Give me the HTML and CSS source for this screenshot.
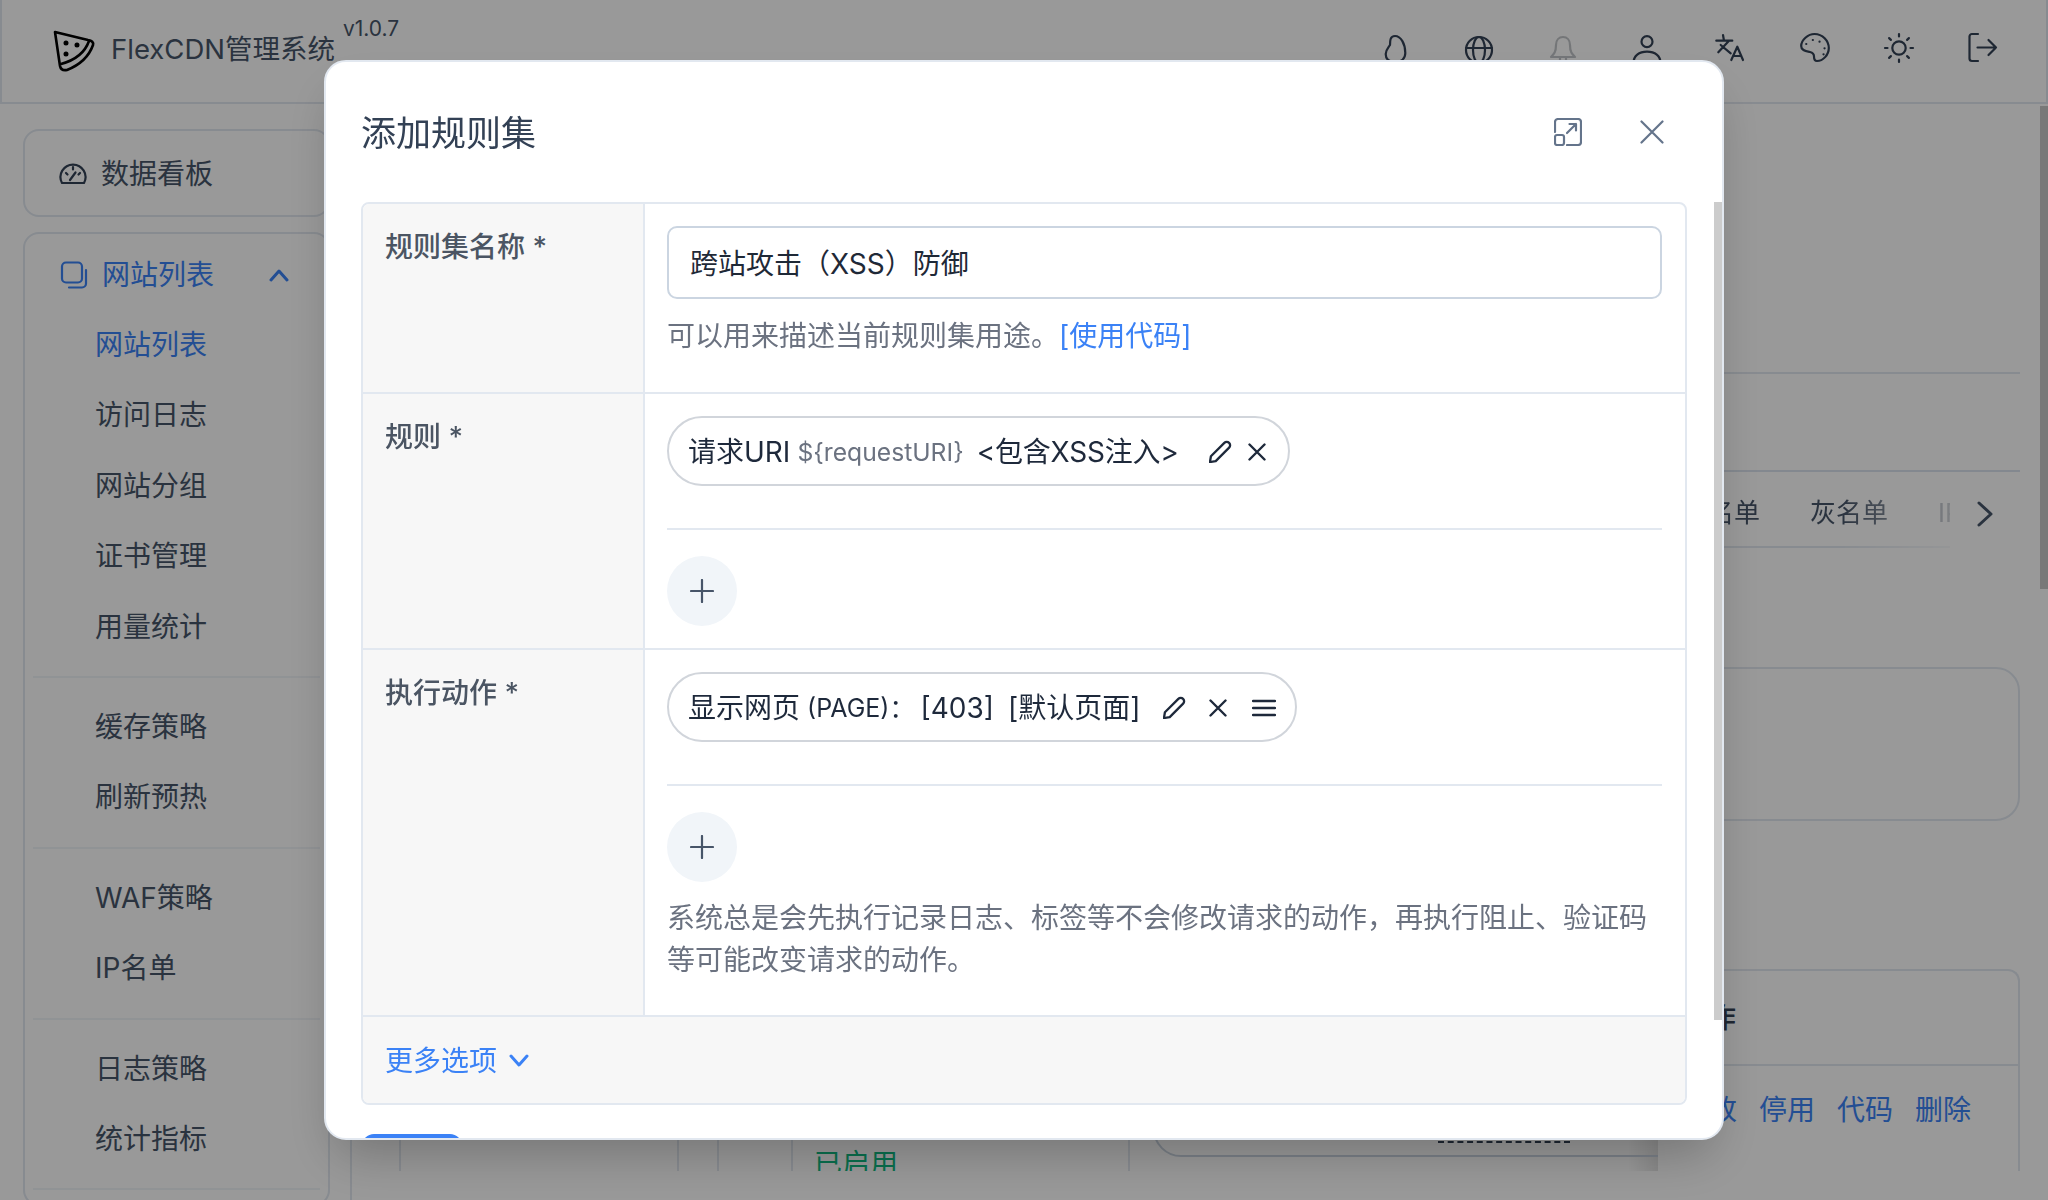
FILE: index.html
```html
<!DOCTYPE html>
<html lang="zh-CN">

<head>
    <meta charset="UTF-8" />
    <meta name="viewport" content="width=device-width, initial-scale=1.0" />
    <title>添加规则集 - FlexCDN管理系统</title>
    <link rel="stylesheet" href="styles.css">
</head>

<body>
    <div class="page">
        <!-- 顶部栏 -->
        <header class="topbar">
            <svg class="logo" viewBox="0 0 70 60" fill="none" stroke="#000" stroke-width="2.6" stroke-linejoin="round" stroke-linecap="round">
                <path d="M15 12L48 20Q54 21 53 25Q47 42 27 50Q21 51 20 46Z" />
                <path d="M21 44Q43 38 49 21" />
                <circle cx="26" cy="23" r="1.2" fill="#000" />
                <circle cx="37" cy="25" r="1.2" fill="#000" />
                <circle cx="26" cy="34" r="1.2" fill="#000" />
            </svg>
            <span class="brand">FlexCDN管理系统</span>
            <sup class="version">v1.0.7</sup>
            <div class="top-icons">
                <span class="top-icon">
                    <svg viewBox="0 0 32 32"><path d="M16 4C11 4 11 9 11 13C9 16 6.7 18 6.7 22C6.7 27 10 30 16 30C22 30 26.3 27 26.3 21C26.3 12 22 4 16 4Z" /></svg>
                </span>
                <span class="top-icon">
                    <svg viewBox="0 0 32 32"><circle cx="16" cy="18" r="13" /><ellipse cx="16" cy="18" rx="6" ry="13" /><path d="M3 16H29" /></svg>
                </span>
                <span class="top-icon muted">
                    <svg viewBox="0 0 32 32"><path d="M4 25C7 22 9 20 9 13C9 8 12 5 16 5C20 5 23 8 23 13C23 20 25 22 28 25Z" /><path d="M13 25V29M19 25V29" /></svg>
                </span>
                <span class="top-icon">
                    <svg viewBox="0 0 32 32"><circle cx="16" cy="9.7" r="5.5" /><path d="M2.5 31C2.5 24 8 19.7 16 19.7C24 19.7 29.5 24 29.5 31" /></svg>
                </span>
                <span class="top-icon">
                    <svg viewBox="0 0 32 32"><path d="M1.3 8.7H17.3M8 3L9 8.7M14 8.7L3.3 20.3M5.7 13L15.7 21.3M16.3 28L22.3 14.7L28 28M18 24H26.4" /></svg>
                </span>
                <span class="top-icon">
                    <svg viewBox="0 0 32 32"><path d="M15.5 2C23.5 2 29.8 8.5 29.8 16C29.8 23 24 29 18 29C15.5 29 15 26.5 15 24.5C15 21.5 13.5 20.5 11 20C8 19.5 2.2 19 2.2 14C2.2 8 9 2 15.5 2Z" /><path d="M13.8 8H13.9M20.5 9.7H20.6M25.5 16.3H25.6M24.5 22.3H24.6M7.2 12H7.3" /></svg>
                </span>
                <span class="top-icon">
                    <svg viewBox="0 0 32 32"><circle cx="16" cy="16" r="6.7" /><path d="M16 2V4.5M16 27.5V30M2 16H4.5M27.5 16H30M6.1 6.1L7.9 7.9M24.1 24.1L25.9 25.9M6.1 25.9L7.9 24.1M24.1 7.9L25.9 6.1" /></svg>
                </span>
                <span class="top-icon">
                    <svg viewBox="0 0 32 32"><path d="M11 2H5A2.5 2.5 0 0 0 2.5 4.5V26.5A2.5 2.5 0 0 0 5 29H11M10.5 15.5H29M21.5 8L29 15.5L21.5 23" /></svg>
                </span>
            </div>
        </header>

        <div class="layout">
            <!-- 左侧菜单 -->
            <aside class="sidebar">
                <div class="side-card side-single">
                    <svg class="side-icon side-gauge" viewBox="0 0 28 22"><path d="M3 20A12.500 12.500 0 1 1 25 20Z" /><path d="M14 4V6.500M7 10L8.500 11.500M21 10L19.500 11.500M11 17L16.500 9.500" /></svg>
                    <span>数据看板</span>
                </div>
                <div class="side-card">
                    <div class="side-head">
                        <svg class="side-icon" viewBox="0 0 28 28"><rect x="2" y="1.5" width="20" height="20" rx="4" /><path d="M9 26.5H22A4 4 0 0 0 26 22.5V9" /></svg>
                        <span>网站列表</span>
                        <svg class="side-arrow" viewBox="0 0 20 14"><path d="M2 12L10 3L18 12" /></svg>
                    </div>
                    <a class="side-item active">网站列表</a>
                    <a class="side-item">访问日志</a>
                    <a class="side-item">网站分组</a>
                    <a class="side-item">证书管理</a>
                    <a class="side-item">用量统计</a>
                    <div class="side-sep"></div>
                    <a class="side-item">缓存策略</a>
                    <a class="side-item">刷新预热</a>
                    <div class="side-sep"></div>
                    <a class="side-item">WAF策略</a>
                    <a class="side-item">IP名单</a>
                    <div class="side-sep"></div>
                    <a class="side-item">日志策略</a>
                    <a class="side-item">统计指标</a>
                    <div class="side-sep"></div>
                </div>
            </aside>

            <!-- 主内容，被弹窗盖住大半 -->
            <main class="main">
                <div class="main-top"></div>
                <div class="main-sub"></div>
                <div class="tabs-bar">
                    <div class="tabs">
                        <span>白名单</span>
                        <span>灰名单</span>
                        <span>IP名单</span>
                    </div>
                    <svg class="tabs-next" viewBox="0 0 16 26"><path d="M2 2L14 13L2 24" /></svg>
                </div>
                <div class="main-card"></div>
                <div class="tbl">
                    <div class="tbl-cell tbl-head"></div>
                    <div class="tbl-cell tbl-head"></div>
                    <div class="tbl-cell tbl-head"></div>
                    <div class="tbl-cell tbl-head"></div>
                    <div class="tbl-cell tbl-head"></div>
                    <div class="tbl-cell tbl-head tbl-ops-head">操作</div>
                    <div class="tbl-cell tbl-name">日志</div>
                    <div class="tbl-cell"></div>
                    <div class="tbl-cell"></div>
                    <div class="tbl-cell tbl-status">已启用</div>
                    <div class="tbl-cell tbl-config">
                        <div class="config-box"><span class="config-dash"></span></div>
                    </div>
                    <div class="tbl-cell tbl-ops">
                        <a>修改</a>
                        <a>停用</a>
                        <a>代码</a>
                        <a>删除</a>
                    </div>
                </div>
            </main>
        </div>
        <div class="page-thumb"></div>
    </div>

    <div class="overlay"></div>

    <!-- 弹窗 -->
    <div class="modal">
        <div class="modal-head">
            <h2>添加规则集</h2>
            <svg class="modal-expand" viewBox="0 0 28 28"><path d="M1 14V4A3 3 0 0 1 4 1H24A3 3 0 0 1 27 4V24A3 3 0 0 1 24 27H13" /><rect x="1" y="17" width="9" height="10" rx="2" /><path d="M13 15L22 6M15.500 6H22V12.500" /></svg>
            <svg class="modal-close" viewBox="0 0 24 24"><path d="M1.500 1.500L22.500 22.500M22.500 1.500L1.500 22.500" /></svg>
        </div>
        <div class="modal-body">
            <div class="form-table">
                <div class="form-row">
                    <div class="form-label">规则集名称 *</div>
                    <div class="form-value">
                        <input class="text-input" type="text" value="跨站攻击（XSS）防御" />
                        <p class="help help-first">可以用来描述当前规则集用途。<a>[使用代码]</a></p>
                    </div>
                </div>
                <div class="form-row">
                    <div class="form-label">规则 *</div>
                    <div class="form-value">
                        <div class="pill">
                            <span>请求URI</span>
                            <span class="pill-var">${requestURI}</span>
                            <span class="pill-op">&lt;包含XSS注入&gt;</span>
                            <svg class="pill-icon pencil-rule" viewBox="0 0 24 24"><path d="M1 23L2 17L16 3A3.500 3.500 0 0 1 21 8L7 22Z" /></svg>
                            <svg class="pill-icon x-icon x-rule" viewBox="0 0 18 18"><path d="M1.500 1.500L16.500 16.500M16.500 1.500L1.500 16.500" /></svg>
                        </div>
                        <div class="sep"></div>
                        <div class="add-btn">
                            <svg viewBox="0 0 24 24"><path d="M12 1V23M1 12H23" /></svg>
                        </div>
                    </div>
                </div>
                <div class="form-row">
                    <div class="form-label">执行动作 *</div>
                    <div class="form-value">
                        <div class="pill">
                            <span>显示网页</span>
                            <span class="pill-code">(PAGE)：</span>
                            <span class="pill-status">[403]</span>
                            <span class="pill-page">[默认页面]</span>
                            <svg class="pill-icon pencil-action" viewBox="0 0 24 24"><path d="M1 23L2 17L16 3A3.500 3.500 0 0 1 21 8L7 22Z" /></svg>
                            <svg class="pill-icon x-icon x-action" viewBox="0 0 18 18"><path d="M1.500 1.500L16.500 16.500M16.500 1.500L1.500 16.500" /></svg>
                            <svg class="pill-icon bars-icon" viewBox="0 0 24 18"><path d="M1 2H23M1 9H23M1 16H23" /></svg>
                        </div>
                        <div class="sep"></div>
                        <div class="add-btn">
                            <svg viewBox="0 0 24 24"><path d="M12 1V23M1 12H23" /></svg>
                        </div>
                        <p class="help help-action">系统总是会先执行记录日志、标签等不会修改请求的动作，再执行阻止、验证码等可能改变请求的动作。</p>
                    </div>
                </div>
                <div class="form-more">
                    <a>更多选项</a>
                    <svg viewBox="0 0 20 14"><path d="M2 2L10 11L18 2" /></svg>
                </div>
            </div>
            <div class="save-btn"></div>
            <div class="modal-thumb"></div>
        </div>
    </div>
</body>

</html>
```
FILE: styles.css
```css
* {
    box-sizing: border-box;
}

html,
body {
    margin: 0;
    height: 100%;
}

body {
    background: #fff;
    color: #475569;
    font-family: Inter, "Noto Sans CJK SC", sans-serif;
    font-size: 28px;
    line-height: 42px;
    overflow: hidden;
}

svg {
    display: block;
    fill: none;
    stroke-linecap: round;
    stroke-linejoin: round;
}

a {
    color: #3b82f6;
}

.page {
    width: 2048px;
    height: 1200px;
    overflow: hidden;
    position: relative;
}

/* 顶部栏 */
.topbar {
    height: 104px;
    border: 2px solid #e2e8f0;
    border-top: none;
    padding-left: 38px;
    display: flex;
}

.logo {
    width: 70px;
    height: 60px;
    margin-top: 20px;
}

.brand {
    margin: 28px 0 0 1px;
    font-size: 27.5px;
}

.version {
    margin: 12px 0 0 8px;
    font-size: 21px;
    line-height: 34px;
    height: 34px;
    vertical-align: baseline;
}

.top-icons {
    margin-left: auto;
    padding-right: 21px;
    display: flex;
}

.top-icon {
    width: 84px;
    padding-top: 32px;
    display: flex;
    justify-content: center;
}

.top-icon svg {
    width: 32px;
    height: 32px;
    stroke: #334155;
    stroke-width: 2.2;
}

.top-icon.muted svg {
    stroke: #c2c5c9;
}

.layout {
    display: flex;
    height: 1096px;
}

/* 左侧菜单 */
.sidebar {
    width: 307px;
    margin-left: 23px;
    padding-top: 25px;
    flex-shrink: 0;
}

.side-card {
    border: 2px solid #e2e8f0;
    border-radius: 16px;
    margin-bottom: 15px;
    padding: 0 8px;
}

.side-single {
    height: 88px;
    padding: 1px 0 0 34px;
    display: flex;
    align-items: center;
    gap: 14px;
}

.side-head {
    height: 76px;
    padding: 6px 0 0 27px;
    display: flex;
    align-items: center;
    gap: 14px;
    color: #3b82f6;
}

.side-icon {
    width: 28px;
    height: 28px;
    stroke: #334155;
    stroke-width: 2.2;
}

.side-gauge {
    height: 22px;
}

.side-head .side-icon {
    stroke: #3b82f6;
}

.side-arrow {
    width: 20px;
    height: 14px;
    margin-left: 41px;
    stroke: #3b82f6;
    stroke-width: 3;
}

.side-item {
    display: block;
    height: 70.4px;
    line-height: 70.4px;
    padding-left: 62px;
    color: #475569;
}

.side-item.active {
    color: #3b82f6;
}

.side-sep {
    height: 2px;
    margin: 14px 0;
    background: #f1f5f9;
}

/* 主内容 */
.main {
    flex: 1;
    margin: 0 28px 0 20px;
    border-left: 2px solid #e2e8f0;
}

.main-top {
    height: 270px;
    border-bottom: 2px solid #e2e8f0;
}

.main-sub {
    height: 98px;
    border-bottom: 2px solid #dbe3ee;
}

.tabs-bar {
    height: 76px;
    display: flex;
    align-items: center;
}

.tabs {
    width: 1598px;
    height: 76px;
    padding: 8px 0 0 1330px;
    display: flex;
    align-items: center;
    gap: 50px;
    overflow: hidden;
    white-space: nowrap;
    font-size: 26px;
    flex-shrink: 0;
    border-bottom: 2px solid #e2e8f0;
    -webkit-mask-image: linear-gradient(to right, #000 1490px, rgba(0, 0, 0, 0.25) 1598px);
    mask-image: linear-gradient(to right, #000 1490px, rgba(0, 0, 0, 0.25) 1598px);
}

.tabs span {
    flex-shrink: 0;
}

.tabs-next {
    width: 16px;
    height: 26px;
    margin: 8px 0 0 27px;
    stroke: #475569;
    stroke-width: 3;
}

.main-card {
    height: 154px;
    margin-top: 119px;
    border: 2px solid #e2e8f0;
    border-radius: 24px;
}

.tbl {
    height: 202px;
    margin: 148px 0 0 47px;
    border-top: 2px solid #e2e8f0;
    border-right: 2px solid #e2e8f0;
    border-top-right-radius: 12px;
    overflow: hidden;
    display: grid;
    grid-template-columns: 278px 40px 74px 337px 530px 1fr;
    grid-template-rows: 95px 1fr;
}

.tbl-cell {
    border-left: 2px solid #e2e8f0;
    white-space: nowrap;
    overflow: hidden;
}

.tbl-head {
    border-bottom: 2px solid #e2e8f0;
}

.tbl-ops-head {
    padding: 26px 0 0 20px;
    color: #334155;
    font-weight: 500;
}

.tbl-name {
    padding: 41px 0 0 68px;
    color: #334155;
}

.tbl-status {
    padding: 77px 0 0 21px;
    color: #10b981;
}

.tbl-config {
    padding: 8px 0 0 23px;
    background: linear-gradient(to left, rgba(0, 0, 0, 0.1), transparent 30px);
}

.config-box {
    width: 560px;
    height: 83px;
    border: 2px solid #cbd5e1;
    border-radius: 28px;
    padding: 0 0 12px 283px;
    display: flex;
    align-items: flex-end;
}

.config-dash {
    width: 132px;
    border-bottom: 2px dashed #334155;
}

.tbl-ops {
    border-left: none;
    padding: 23px 0 0 23px;
    display: flex;
    gap: 22px;
}

.page-thumb {
    position: absolute;
    right: 0;
    top: 106px;
    width: 8px;
    height: 483px;
    background: #c8c8c8;
}

.overlay {
    position: fixed;
    inset: 0;
    background: rgba(0, 0, 0, 0.4);
}

/* 弹窗 */
.modal {
    position: fixed;
    left: 324px;
    top: 60px;
    width: 1400px;
    height: 1080px;
    background: #fff;
    border: 2px solid #e2e8f0;
    border-radius: 22px;
    box-shadow: 0 25px 50px -12px rgba(0, 0, 0, 0.25);
    overflow: hidden;
}

.modal-head {
    height: 140px;
    padding: 51px 43px 0 35px;
    display: flex;
}

.modal-head h2 {
    margin: 0;
    font-size: 35px;
    line-height: 40px;
    font-weight: 400;
    color: #334155;
}

.modal-expand {
    width: 28px;
    height: 28px;
    margin: 5px 0 0 auto;
    stroke: #64748b;
    stroke-width: 2.200;
}

.modal-close {
    width: 24px;
    height: 24px;
    margin: 7px 15px 0 58px;
    stroke: #64748b;
    stroke-width: 2.200;
}

.modal-body {
    position: relative;
    height: 938px;
    padding-left: 35px;
    overflow: hidden;
}

.form-table {
    width: 1326px;
    border: 2px solid #e2e8f0;
    border-radius: 8px;
    overflow: hidden;
}

.form-row {
    display: flex;
    border-bottom: 2px solid #e2e8f0;
}

.form-label {
    width: 282px;
    flex-shrink: 0;
    padding: 22px 0 0 22px;
    background: #f7f7f7;
    border-right: 2px solid #e2e8f0;
    color: #4b5563;
    font-weight: 500;
}

.form-value {
    flex: 1;
    padding: 22px 23px 22px 22px;
}

.text-input {
    display: block;
    width: 100%;
    height: 73px;
    padding: 0 21px 2px;
    border: 2px solid #cbd5e1;
    border-radius: 10px;
    font: inherit;
    color: #1f2937;
    background: #fff;
    outline: none;
}

.help {
    margin: 0;
    color: #6b7280;
}

.help-first {
    margin: 16px 0 13px;
}

.help-action {
    margin: 15px 0 12px;
}

.pill {
    display: inline-flex;
    align-items: center;
    height: 70px;
    padding: 1px 19px 0;
    border: 2px solid #d1d5db;
    border-radius: 35px;
    color: #1e293b;
    white-space: nowrap;
    vertical-align: top;
}

.pill-var {
    margin-left: 7px;
    font-size: 24.7px;
    color: #6b7280;
}

.pill-op {
    margin-left: 13px;
    letter-spacing: -0.2px;
}

.pill-code {
    margin-left: 7px;
    font-size: 25px;
}

.pill-status {
    margin-left: 6px;
}

.pill-page {
    margin-left: 14px;
}

.pill-icon {
    stroke: #1e293b;
    stroke-width: 2.400;
    flex-shrink: 0;
}

.pencil-rule,
.pencil-action {
    width: 23px;
    height: 23px;
}

.pencil-rule {
    margin-left: 30px;
}

.pencil-action {
    margin-left: 23px;
}

.x-icon {
    width: 18px;
    height: 18px;
}

.x-rule {
    margin: 0 3px 0 16px;
}

.x-action {
    margin-left: 23px;
}

.bars-icon {
    width: 24px;
    height: 18px;
    margin-left: 25px;
}

.sep {
    height: 2px;
    margin-top: 42px;
    background: #e2e8f0;
}

.add-btn {
    width: 70px;
    height: 70px;
    margin-top: 26px;
    border-radius: 50%;
    background: #f1f5f9;
    display: flex;
    align-items: center;
    justify-content: center;
}

.add-btn svg {
    width: 24px;
    height: 24px;
    stroke: #475569;
    stroke-width: 2.200;
}

.form-more {
    height: 86px;
    padding: 2px 0 0 22px;
    background: #f7f7f7;
    display: flex;
    align-items: center;
    gap: 12px;
}

.form-more svg {
    width: 20px;
    height: 14px;
    stroke: #3b82f6;
    stroke-width: 3;
}

.save-btn {
    width: 100px;
    height: 60px;
    margin: 29px 0 0 1px;
    background: #3b82f6;
    border-radius: 12px;
}

.modal-thumb {
    position: absolute;
    right: 0;
    top: 0;
    width: 8px;
    height: 818px;
    background: #cccccc;
}
```
